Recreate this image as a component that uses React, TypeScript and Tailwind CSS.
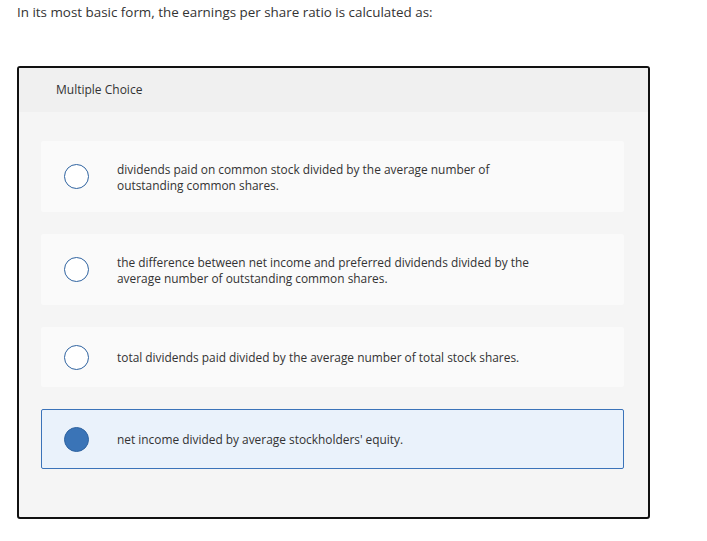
const options = [
  {
    text: "dividends paid on common stock divided by the average number of outstanding common shares.",
    selected: false,
  },
  {
    text: "the difference between net income and preferred dividends divided by the average number of outstanding common shares.",
    selected: false,
  },
  {
    text: "total dividends paid divided by the average number of total stock shares.",
    selected: false,
  },
  {
    text: "net income divided by average stockholders' equity.",
    selected: true,
  },
];

export default function App() {
  return (
    <main className="min-h-[541px] bg-white pl-[17px] pr-[57px] pt-[4px] font-['Open_Sans',sans-serif] text-[#333]">
      <p className="text-[13.4px] leading-[16px]">
        In its most basic form, the earnings per share ratio is calculated as:
      </p>

      <section className="mt-[46px] overflow-hidden rounded-[3px] border-2 border-[#111] bg-[#f5f5f5]">
        <header className="flex h-[44px] items-center bg-[#f0f0f0] px-[37px] text-[12px]">
          Multiple Choice
        </header>

        <div className="grid gap-[22px] pb-[48px] pl-[22px] pr-[24px] pt-[29px]">
          {options.map((o, i) => (
            <label
              key={i}
              className={
                o.selected
                  ? "flex items-center rounded-[2px] border border-[#3b73b9] bg-[#eaf2fb] py-[16.5px] pl-[22px] pr-[90px]"
                  : "flex items-center rounded-[2px] border border-transparent bg-[#fafafa] py-[16.5px] pl-[22px] pr-[90px]"
              }
            >
              <span
                className={
                  o.selected
                    ? "h-[25px] w-[25px] shrink-0 rounded-full border-[1.5px] border-[#2f63a0] bg-[#3a74b7]"
                    : "h-[25px] w-[25px] shrink-0 rounded-full border-[1.5px] border-[#2f63a0] bg-white"
                }
              />
              <span className="ml-[28px] py-[2px] text-[11.9px] leading-[16px]">{o.text}</span>
            </label>
          ))}
        </div>
      </section>
    </main>
  );
}
